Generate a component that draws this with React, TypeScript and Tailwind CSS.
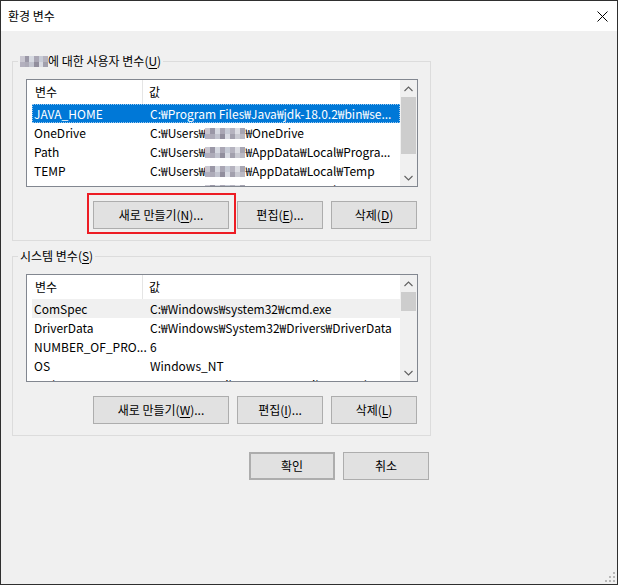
import type { ReactNode } from "react";

type Row = { name: string; value: ReactNode; selected?: boolean; hover?: boolean };

// pixelated blur over the user name, like the original capture
const tiles = [
  ["bg-[#c9c7d1]", "bg-[#b3b0be]"],
  ["bg-[#9a97a6]", "bg-[#adabb8]"],
  ["bg-[#d6d9e1]", "bg-[#c2c4cf]"],
  ["bg-[#a9a6b4]", "bg-[#918e9d]"],
  ["bg-[#c7cbd6]", "bg-[#d9dbe3]"],
  ["bg-[#b5b3bf]", "bg-[#a2a0ad]"],
  ["bg-[#dcdde3]", "bg-[#c9cad2]"],
  ["bg-[#a7a5b2]", "bg-[#bab9c4]"],
];

function Mosaic({ count, className }: { count: number; className: string }) {
  return (
    <span className={`inline-block h-[11px] overflow-hidden align-[-1px] ${className}`}>
      <span className="flex h-full blur-[0.3px]">
        {tiles.slice(0, count).map((t, i) => (
          <span key={i} className="flex flex-col flex-1">
            <span className={`flex-1 ${t[0]}`} />
            <span className={`flex-1 ${t[1]}`} />
          </span>
        ))}
      </span>
    </span>
  );
}

function Mn({ children }: { children: ReactNode }) {
  return <span className="underline underline-offset-2">{children}</span>;
}

function Chevron({ up }: { up?: boolean }) {
  return (
    <svg width="9" height="6" viewBox="0 0 9 6" className={up ? "" : "rotate-180"}>
      <polyline points="0.5,5 4.5,1 8.5,5" fill="none" stroke="#606060" strokeWidth="1.1" />
    </svg>
  );
}

function ScrollBar({ thumb }: { thumb: string }) {
  return (
    <div className="w-[17px] flex flex-col bg-[#f0f0f0]">
      <div className="h-[17px] flex items-center justify-center">
        <Chevron up />
      </div>
      <div className={`bg-[#cdcdcd] mx-[1px] ${thumb}`} />
      <div className="flex-1" />
      <div className="h-[17px] flex items-center justify-center">
        <Chevron />
      </div>
    </div>
  );
}

function VarList({ rows, thumb }: { rows: Row[]; thumb: string }) {
  return (
    <div className="h-[108px] w-[392px] border border-[#828790] bg-white flex overflow-hidden">
      <div className="flex-1 flex flex-col overflow-hidden">
        <div className="h-[24px] shrink-0 flex items-center">
          <div className="w-[116px] h-full flex items-center pl-[8px] border-r border-[#e5e5e5]">변수</div>
          <div className="pl-[6px]">값</div>
        </div>
        {rows.map((r, i) => (
          <div
            key={i}
            className={`ml-[5px] h-[19px] shrink-0 grid grid-cols-[116px_1fr] items-center leading-[19px] whitespace-nowrap ${
              r.selected
                ? "bg-[#0078d7] text-white outline outline-1 outline-dotted -outline-offset-1 outline-[#9cc8ee]"
                : r.hover
                ? "bg-[#f0f0f0]"
                : ""
            }`}
          >
            <div className="pl-[2px] overflow-hidden">{r.name}</div>
            <div className="pl-[2px] overflow-hidden">{r.value}</div>
          </div>
        ))}
      </div>
      <ScrollBar thumb={thumb} />
    </div>
  );
}

function Btn({ children, className = "" }: { children: ReactNode; className?: string }) {
  return (
    <button className={`h-[28px] bg-[#e1e1e1] border border-[#adadad] flex items-center justify-center ${className}`}>
      {children}
    </button>
  );
}

function GroupBox({ legend, children }: { legend: ReactNode; children: ReactNode }) {
  return (
    <fieldset className="w-[419px] border border-[#dcdcdc] ml-[11px]">
      <legend className="ml-[5px] px-[2px] leading-[16px]">{legend}</legend>
      <div className="pl-[13px] pr-[12px] pt-[10px] pb-[11px]">{children}</div>
    </fieldset>
  );
}

const userRows: Row[] = [
  { name: "JAVA_HOME", value: "C:₩Program Files₩Java₩jdk-18.0.2₩bin₩se...", selected: true },
  { name: "OneDrive", value: <>C:₩Users₩<Mosaic count={8} className="w-[40px]" />₩OneDrive</> },
  { name: "Path", value: <>C:₩Users₩<Mosaic count={8} className="w-[40px]" />₩AppData₩Local₩Progra...</> },
  { name: "TEMP", value: <>C:₩Users₩<Mosaic count={8} className="w-[40px]" />₩AppData₩Local₩Temp</> },
  { name: "TMP", value: <>C:₩Users₩<Mosaic count={8} className="w-[40px]" />₩AppData₩Local₩Temp</> },
];

const sysRows: Row[] = [
  { name: "ComSpec", value: "C:₩Windows₩system32₩cmd.exe", hover: true },
  { name: "DriverData", value: "C:₩Windows₩System32₩Drivers₩DriverData" },
  { name: "NUMBER_OF_PRO...", value: "6" },
  { name: "OS", value: "Windows_NT" },
  { name: "Path", value: "C:₩Program Files₩Common Files₩Oracle₩Java₩javapath;..." },
];

export default function App() {
  return (
    <div className="w-[618px] h-[585px] border border-[#2f2f2f] bg-[#f0f0f0] flex flex-col text-[12px] text-black font-['Noto_Sans_CJK_KR','Malgun_Gothic',sans-serif]">
      <div className="h-[30px] bg-white flex items-center justify-between pl-[7px] pr-[9px]">
        <span>환경 변수</span>
        <svg width="11" height="11" viewBox="0 0 11 11">
          <path d="M0.5 0.5 L10.5 10.5 M10.5 0.5 L0.5 10.5" stroke="#000" strokeWidth="1" />
        </svg>
      </div>
      <div className="flex-1 relative pt-[22px]">
        <GroupBox
          legend={
            <>
              <Mosaic count={6} className="w-[28px]" />에 대한 사용자 변수(<Mn>U</Mn>)
            </>
          }
        >
          <VarList rows={userRows} thumb="h-[57px]" />
          <div className="flex justify-end gap-[8px] pr-[1px] mt-[14px]">
            <div className="relative">
              <Btn className="w-[136px]">
                새로 만들기(<Mn>N</Mn>)...
              </Btn>
              <div className="absolute -left-[6px] -right-[7px] -top-[8px] -bottom-[5px] border-2 border-[#ed1c24]" />
            </div>
            <Btn className="w-[86px]">
              편집(<Mn>E</Mn>)...
            </Btn>
            <Btn className="w-[86px]">
              삭제(<Mn>D</Mn>)
            </Btn>
          </div>
        </GroupBox>
        <div className="h-[7px]" />
        <GroupBox legend={<>시스템 변수(<Mn>S</Mn>)</>}>
          <VarList rows={sysRows} thumb="h-[19px]" />
          <div className="flex justify-end gap-[8px] pr-[1px] mt-[14px]">
            <Btn className="w-[136px]">
              새로 만들기(<Mn>W</Mn>)...
            </Btn>
            <Btn className="w-[86px]">
              편집(<Mn>I</Mn>)...
            </Btn>
            <Btn className="w-[86px]">
              삭제(<Mn>L</Mn>)
            </Btn>
          </div>
        </GroupBox>
        <div className="w-[419px] ml-[11px] mt-[16px] flex justify-end gap-[8px] pr-[2px]">
          <Btn className="w-[86px] border-2 border-[#0078d7]">확인</Btn>
          <Btn className="w-[86px]">취소</Btn>
        </div>
        <svg className="absolute right-[2px] bottom-[2px]" width="10" height="10" viewBox="0 0 10 10">
          <g fill="#b8b8b8">
            <rect x="8" y="0" width="2" height="2" />
            <rect x="4" y="4" width="2" height="2" />
            <rect x="8" y="4" width="2" height="2" />
            <rect x="0" y="8" width="2" height="2" />
            <rect x="4" y="8" width="2" height="2" />
            <rect x="8" y="8" width="2" height="2" />
          </g>
        </svg>
      </div>
    </div>
  );
}
